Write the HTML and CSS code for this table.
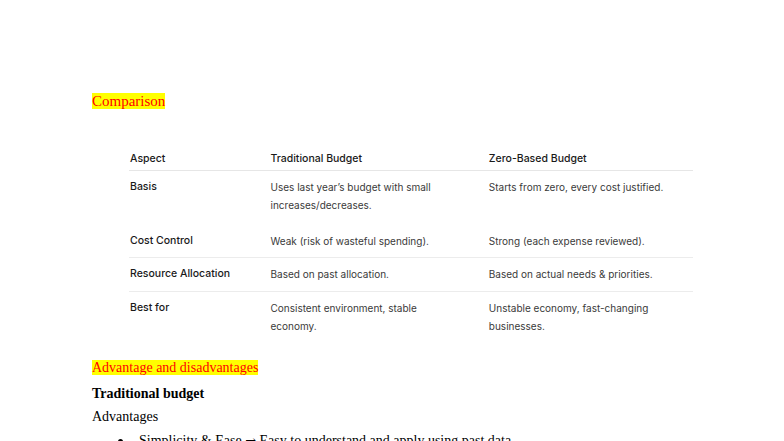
FILE: index.html
```html
<!DOCTYPE html>
<html>
<head>
<meta charset="utf-8">
<link rel="stylesheet" href="styles.css">
</head>
<body>
<div class="doc">
  <p class="heading"><span class="hl">Comparison</span></p>
  <table class="cmp">
    <thead>
      <tr><th class="c1">Aspect</th><th class="c2">Traditional Budget</th><th class="c3">Zero-Based Budget</th></tr>
    </thead>
    <tbody>
      <tr class="first"><td class="key">Basis</td><td>Uses last year’s budget with small<br>increases/decreases.</td><td>Starts from zero, every cost justified.</td></tr>
      <tr class="hidden"><td class="key">Cost Control</td><td>Weak (risk of wasteful spending).</td><td>Strong (each expense reviewed).</td></tr>
      <tr><td class="key">Resource Allocation</td><td>Based on past allocation.</td><td>Based on actual needs &amp; priorities.</td></tr>
      <tr><td class="key">Best for</td><td>Consistent environment, stable<br>economy.</td><td>Unstable economy, fast-changing<br>businesses.</td></tr>
    </tbody>
  </table>
  <p class="heading2"><span class="hl">Advantage and disadvantages</span></p>
  <p class="bold">Traditional budget</p>
  <p class="plain">Advantages</p>
  <ul class="list">
    <li class="item">Simplicity &amp; Ease <span class="arrow">→</span> Easy to understand and apply using past data.</li>
  </ul>
</div>
</body>
</html>
```
FILE: styles.css
```css
html, body {
  margin: 0;
  padding: 0;
  background: #ffffff;
}
.doc {
  padding: 92px 0 0 92px;
  font-family: "Liberation Serif", "DejaVu Serif", "Times New Roman", serif;
  font-size: 14px;
  color: #000;
}
.doc p {
  margin: 0;
  line-height: 18px;
}
.hl {
  background: #ffff00;
  color: #ff0000;
}
.heading {
  font-size: 15px;
  margin-bottom: 31px !important;
}
.cmp {
  margin-left: 37px;
  width: 564px;
  border-collapse: collapse;
  font-family: Inter, "Noto Sans", sans-serif;
  font-size: 10px;
  color: #3a3a3a;
}
.cmp th {
  text-align: left;
  font-weight: 500;
  font-size: 10.5px;
  color: #1a1a1a;
  padding: 9px 0 2px 1px;
  line-height: 18px;
  border-bottom: 1px solid #e6e6e6;
}
.cmp td {
  padding: 7px 0 8px 1px;
  line-height: 18px;
  vertical-align: top;
  border-top: 1px solid #ececec;
}
.cmp tr.first td {
  border-top: none;
  padding-bottom: 10px;
}
.cmp tr.hidden td {
  border-top: 1px solid transparent;
  padding-bottom: 7px;
}
.cmp td.key {
  font-weight: 500;
  font-size: 10.5px;
  color: #1a1a1a;
}
.c1 { width: 140px; }
.c2 { width: 218px; }
.c3 { width: 205px; }
.heading2 {
  margin-top: 16px !important;
}
.bold {
  font-weight: bold;
  margin-top: 8px !important;
}
.plain {
  margin-top: 5px !important;
}
.list {
  list-style: none;
  margin: 6px 0 0 0;
  padding-left: 26px;
  line-height: 18px;
}
.item {
  display: flex;
  align-items: center;
  white-space: pre;
}
.item::before {
  content: "";
  width: 5px;
  height: 5px;
  border-radius: 50%;
  background: #000;
  margin-right: 16px;
  flex: none;
}
.arrow {
  font-family: "DejaVu Serif", serif;
  font-size: 13px;
}
```
